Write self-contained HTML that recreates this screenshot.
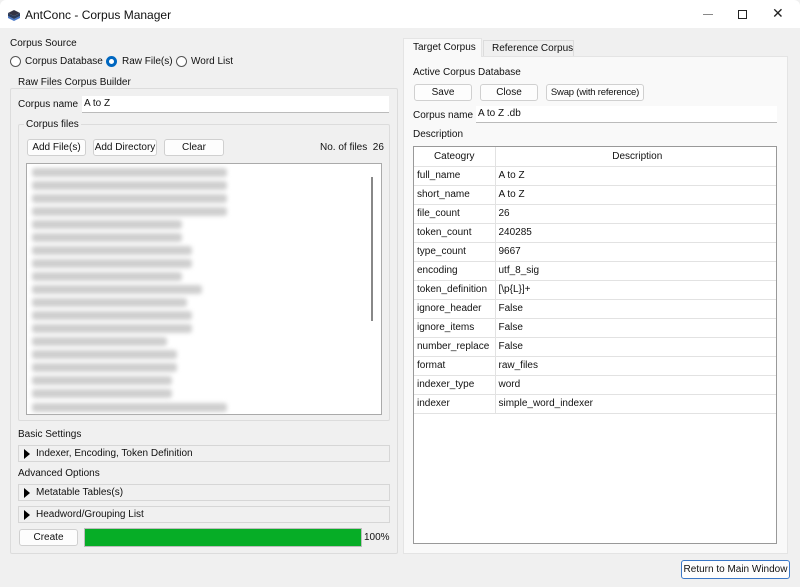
<!DOCTYPE html>
<html><head><style>
*{box-sizing:border-box;margin:0;padding:0}
body{width:800px;height:587px;background:#f0f0f0;font-family:"Liberation Sans",sans-serif;font-size:10px;color:#111;position:relative;overflow:hidden}
.a{position:absolute;white-space:nowrap}
.btn{position:absolute;background:#fdfdfd;border:1px solid #d0d0d0;border-radius:3px;text-align:center;font-size:10px;line-height:15px;white-space:nowrap}
.inp{position:absolute;background:#fff;border-bottom:1px solid #bbb;padding-left:2px;line-height:15px}
.grp{position:absolute;border:1px solid #dcdcdc;border-radius:2px}
.exp{position:absolute;left:18px;width:372px;height:17px;border:1px solid #d6d6d6;background:#f0f0f0;line-height:16px;padding-left:17px}
.exp:before{content:"";position:absolute;left:5px;top:3px;border-left:6px solid #000;border-top:5px solid transparent;border-bottom:5px solid transparent}
.radio{position:absolute;width:11px;height:11px;border:1px solid #555;border-radius:50%;background:#fff}
table{border-collapse:collapse}
td{height:19px;border-bottom:1px solid #e2e2e2;padding-left:3px;font-size:10px}
td:first-child{border-right:1px solid #e2e2e2;width:81px}
.blur{position:absolute;left:32px;height:9px;background:#cfcfcf;filter:blur(2px);border-radius:3px}
</style></head><body>
<div class="a" style="left:0;top:0;width:800px;height:28px;background:#fff;border-radius:6px 6px 0 0"></div>
<svg class="a" style="left:7px;top:8px" width="14" height="14"><path d="M1 5 L7 2 L13 5 L7 8Z" fill="#334"/><path d="M1 8 L7 11 L13 8 L13 10 L7 13 L1 10Z" fill="#4a78c8"/><path d="M1 5 L7 8 L13 5 L13 8 L7 11 L1 8Z" fill="#2a3a5a"/></svg>
<div class="a" style="left:25px;top:8px;font-size:12px">AntConc - Corpus Manager</div>
<div class="a" style="left:703px;top:14px;width:10px;border-top:1px solid #888"></div>
<div class="a" style="left:738px;top:10px;width:9px;height:9px;border:1px solid #222"></div>
<div class="a" style="left:772px;top:5px;font-size:14px;color:#222">✕</div>

<div class="a" style="left:10px;top:38px">Corpus Source</div>
<div class="radio" style="left:10px;top:56px"></div><div class="a" style="left:25px;top:56px">Corpus Database</div>
<div class="radio" style="left:106px;top:56px;border-color:#0067c0;border-width:3px"></div><div class="a" style="left:122px;top:56px">Raw File(s)</div>
<div class="radio" style="left:176px;top:56px"></div><div class="a" style="left:191px;top:56px">Word List</div>

<div class="grp" style="left:10px;top:88px;width:388px;height:466px"></div>
<div class="a" style="left:16px;top:77px;background:#f0f0f0;padding:0 2px">Raw Files Corpus Builder</div>
<div class="a" style="left:18px;top:99px">Corpus name</div>
<div class="inp" style="left:82px;top:96px;width:307px;height:17px">A to Z</div>
<div class="grp" style="left:18px;top:124px;width:372px;height:297px"></div>
<div class="a" style="left:24px;top:119px;background:#f0f0f0;padding:0 2px">Corpus files</div>
<div class="btn" style="left:27px;top:139px;width:59px;height:17px">Add File(s)</div>
<div class="btn" style="left:93px;top:139px;width:64px;height:17px">Add Directory</div>
<div class="btn" style="left:164px;top:139px;width:60px;height:17px">Clear</div>
<div class="a" style="left:320px;top:142px">No. of files&nbsp; 26</div>
<div class="a" style="left:26px;top:163px;width:356px;height:252px;background:#fff;border:1px solid #aaa"></div>
<div class="a" style="left:371px;top:177px;width:2px;height:144px;background:#888"></div>
<div class="blur" style="top:168px;width:195px"></div><div class="blur" style="top:181px;width:195px"></div><div class="blur" style="top:194px;width:195px"></div><div class="blur" style="top:207px;width:195px"></div><div class="blur" style="top:220px;width:150px"></div><div class="blur" style="top:233px;width:150px"></div><div class="blur" style="top:246px;width:160px"></div><div class="blur" style="top:259px;width:160px"></div><div class="blur" style="top:272px;width:150px"></div><div class="blur" style="top:285px;width:170px"></div><div class="blur" style="top:298px;width:155px"></div><div class="blur" style="top:311px;width:160px"></div><div class="blur" style="top:324px;width:160px"></div><div class="blur" style="top:337px;width:135px"></div><div class="blur" style="top:350px;width:145px"></div><div class="blur" style="top:363px;width:145px"></div><div class="blur" style="top:376px;width:140px"></div><div class="blur" style="top:389px;width:140px"></div><div class="blur" style="top:403px;width:195px"></div>

<div class="a" style="left:18px;top:429px">Basic Settings</div>
<div class="exp" style="top:445px">Indexer, Encoding, Token Definition</div>
<div class="a" style="left:18px;top:468px">Advanced Options</div>
<div class="exp" style="top:484px">Metatable Tables(s)</div>
<div class="exp" style="top:506px">Headword/Grouping List</div>
<div class="btn" style="left:19px;top:529px;width:59px;height:17px">Create</div>
<div class="a" style="left:84px;top:528px;width:278px;height:19px;background:#06ad26;border:1px solid #bcbcbc"></div>
<div class="a" style="left:364px;top:532px">100%</div>

<div class="a" style="left:403px;top:56px;width:385px;height:498px;background:#f9f9f9;border:1px solid #e4e4e4"></div>
<div class="a" style="left:403px;top:38px;width:79px;height:19px;background:#f9f9f9;border:1px solid #e4e4e4;border-bottom:none;padding:3px 0 0 9px">Target Corpus</div>
<div class="a" style="left:483px;top:40px;width:91px;height:16px;border:1px solid #dcdcdc;border-bottom:none;padding:2px 0 0 8px">Reference Corpus</div>
<div class="a" style="left:413px;top:67px">Active Corpus Database</div>
<div class="btn" style="left:414px;top:84px;width:58px;height:17px">Save</div>
<div class="btn" style="left:480px;top:84px;width:58px;height:17px">Close</div>
<div class="btn" style="left:546px;top:84px;width:98px;height:17px;font-size:9.5px;letter-spacing:-0.2px">Swap (with reference)</div>
<div class="a" style="left:413px;top:110px">Corpus name</div>
<div class="inp" style="left:476px;top:106px;width:301px;height:17px">A to Z .db</div>
<div class="a" style="left:413px;top:129px">Description</div>
<div class="a" style="left:413px;top:146px;width:364px;height:398px;background:#fff;border:1px solid #999">
<table style="width:362px">
<tr><td style="text-align:center;padding:0">Cateogry</td><td style="text-align:center">Description</td></tr>
<tr><td>full_name</td><td>A to Z</td></tr>
<tr><td>short_name</td><td>A to Z</td></tr>
<tr><td>file_count</td><td>26</td></tr>
<tr><td>token_count</td><td>240285</td></tr>
<tr><td>type_count</td><td>9667</td></tr>
<tr><td>encoding</td><td>utf_8_sig</td></tr>
<tr><td>token_definition</td><td>[\p{L}]+</td></tr>
<tr><td>ignore_header</td><td>False</td></tr>
<tr><td>ignore_items</td><td>False</td></tr>
<tr><td>number_replace</td><td>False</td></tr>
<tr><td>format</td><td>raw_files</td></tr>
<tr><td>indexer_type</td><td>word</td></tr>
<tr><td>indexer</td><td>simple_word_indexer</td></tr>
</table></div>
<div class="btn" style="left:681px;top:560px;width:109px;height:19px;border:1px solid #3a78c8;line-height:17px">Return to Main Window</div>
</body></html>
